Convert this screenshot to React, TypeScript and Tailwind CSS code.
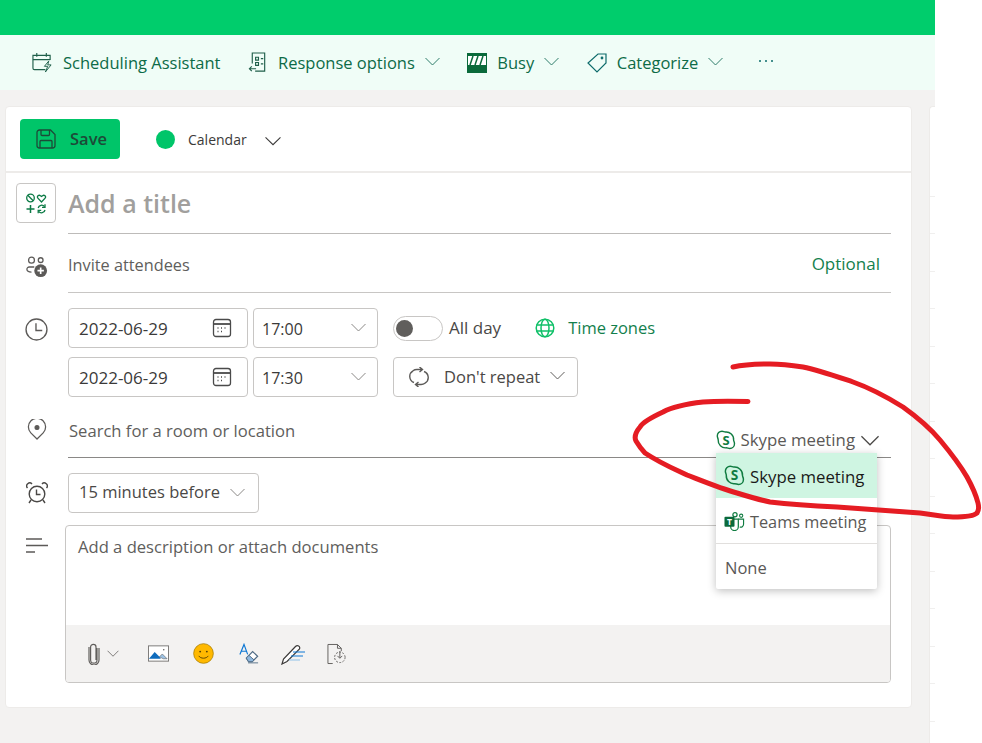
import type { ReactNode } from 'react';

const Chevron = ({ className = 'w-[15px] h-[9px] text-[#605e5c]' }: { className?: string }) => (
  <svg viewBox="0 0 15 9" className={className} fill="none" stroke="currentColor" strokeWidth="1">
    <path d="M0.5 1 L7.5 8 L14.5 1" />
  </svg>
);

const SkypeIcon = ({ className = '' }: { className?: string }) => (
  <svg viewBox="0 0 20 20" className={className} fill="none">
    <path
      d="M6 1.200c1.300 0 2.100.7 3.400.8 4.300-.5 8.700 3.400 8.200 8 .1 1.300.9 2.100.9 3.700 0 2.700-2.100 4.800-4.700 4.800-1.400 0-2.200-.7-3.600-.7C5.800 18.300 1.800 14.500 2.200 10c.1-1.400-.9-2.300-.9-4C1.300 3.300 3.300 1.200 6 1.200z"
      stroke="#107c41"
      strokeWidth="1.400"
    />
    <text x="10" y="14.500" textAnchor="middle" fontSize="13" fontWeight="700" fill="#107c41" fontFamily="Open Sans, sans-serif">
      S
    </text>
  </svg>
);

const TeamsIcon = ({ className = '' }: { className?: string }) => (
  <svg viewBox="0 0 22 20" className={className} fill="none">
    <circle cx="11.500" cy="3.500" r="2.200" stroke="#107c41" strokeWidth="1.300" />
    <circle cx="18" cy="4.500" r="1.700" stroke="#107c41" strokeWidth="1.100" />
    <path d="M15 8h5.500v5.500a3 3 0 0 1-4 2.800" stroke="#107c41" strokeWidth="1.200" />
    <path d="M7 8h8v8a4 4 0 0 1-8 0z" stroke="#107c41" strokeWidth="1.300" />
    <rect x="0.500" y="5.500" width="10.500" height="10.500" rx="1" fill="#0b6a3b" />
    <text x="5.700" y="14" textAnchor="middle" fontSize="9" fontWeight="700" fill="#fff" fontFamily="Open Sans, sans-serif">
      T
    </text>
  </svg>
);

const CalendarIcon = () => (
  <svg viewBox="0 0 20 20" className="w-[20px] h-[20px] text-[#4a4a4a]" fill="none" stroke="currentColor" strokeWidth="1.300">
    <rect x="1.500" y="1.500" width="17" height="17" rx="2.500" />
    <path d="M1.500 6h17" strokeWidth="1.800" />
    <path d="M5.500 10h1M9 10h1M12.500 10h1M5.500 13.500h1M9 13.500h1" strokeWidth="1.400" />
  </svg>
);

const ToolbarItem = ({ icon, label, chevron }: { icon: ReactNode; label: string; chevron?: boolean }) => (
  <div className="flex items-center gap-[10px]">
    {icon}
    <span className="pt-[2px] text-[16.500px] text-[#0d6b47]">{label}</span>
    {chevron && <Chevron className="w-[15px] h-[9px] -mt-[3px] text-[#2e7d6a]" />}
  </div>
);

const DateField = ({ value }: { value: string }) => (
  <div className="w-[180px] h-[40px] flex items-center justify-between pl-[10px] pr-[15px] border border-[#c8c6c4] rounded-[4px] text-[17px] text-[#3b3a39]">
    <span className="pt-[1px]">{value}</span>
    <CalendarIcon />
  </div>
);

const TimeField = ({ value }: { value: string }) => (
  <div className="w-[125px] h-[40px] flex items-center justify-between pl-[8px] pr-[11px] border border-[#c8c6c4] rounded-[4px] text-[16px] text-[#3b3a39]">
    <span className="pt-[1px]">{value}</span>
    <Chevron className="w-[15px] h-[9px] -mt-[2px] text-[#8a8886]" />
  </div>
);

export default function App() {
  return (
    <div className="relative w-[982px] h-[743px] overflow-hidden bg-white font-['Open_Sans',sans-serif]">
      <div className="w-[935px] h-full flex flex-col bg-[#f3f2f1]">
        <div className="h-[35px] bg-[#00cd6c]" />
        <div className="h-[55px] flex items-center pl-[32px] bg-[#f0fdf7]">
          <div className="flex items-center gap-[27.500px]">
            <ToolbarItem
              label="Scheduling Assistant"
              icon={
                <svg viewBox="0 0 22 22" className="w-[21px] h-[21px]" fill="none" stroke="#1f5f4a" strokeWidth="1.200">
                  <path d="M14 18.500H2.500a1.500 1.500 0 0 1-1.500-1.500V3.500h18v5" stroke="#1f5f4a" />
                  <path d="M1 8h18M5 1v4M15 1v4" />
                  <path d="M17.500 9.500L13 15h3.500L14 21l6-7.500h-3.500z" strokeWidth="1" />
                </svg>
              }
            />
            <ToolbarItem
              label="Response options"
              chevron
              icon={
                <svg viewBox="0 0 20 22" className="w-[20px] h-[21px]" fill="none" stroke="#1f5f4a" strokeWidth="1.200">
                  <path d="M4 12V1h13v19H7" />
                  <path d="M7.500 5.500h3v3h-3zM7.500 11h3v3h-3zM13 7h2.500M13 12.500h2.500" />
                  <path d="M8 17.500H1M3.500 15l-2.500 2.500L3.500 20" />
                </svg>
              }
            />
            <ToolbarItem
              label="Busy"
              chevron
              icon={
                <svg viewBox="0 0 20 20" className="w-[20px] h-[20px]">
                  <rect x="0.500" y="0.500" width="19" height="19" fill="#fff" stroke="#0b6a3b" />
                  <rect x="0" y="12" width="20" height="8" fill="#0b6a3b" />
                  <rect x="0" y="0" width="20" height="3" fill="#0b6a3b" />
                  <path d="M3 12l3-9M8 12l3-9M13 12l3-9" stroke="#0b6a3b" strokeWidth="1.500" />
                </svg>
              }
            />
            <ToolbarItem
              label="Categorize"
              chevron
              icon={
                <svg viewBox="0 0 20 20" className="w-[20px] h-[20px]" fill="none" stroke="#0d6b6b" strokeWidth="1.200">
                  <path d="M11 1h8v9l-9 9-9-9z" />
                  <circle cx="15" cy="5" r="0.800" fill="#0d6b6b" />
                </svg>
              }
            />
            <span className="flex gap-[4px] ml-[8px] -mt-[3px]">
              <span className="w-[2px] h-[2px] rounded-full bg-[#0d6b6b]" />
              <span className="w-[2px] h-[2px] rounded-full bg-[#0d6b6b]" />
              <span className="w-[2px] h-[2px] rounded-full bg-[#0d6b6b]" />
            </span>
          </div>
        </div>

        <div className="flex-1 flex gap-[17px] pt-[16px] pl-[5px]">
          <div className="w-[907px] h-[602px] rounded-[4px] bg-white border border-[#edebe9]">
            {/* header */}
            <div className="h-[66px] flex items-center pl-[14px] border-b-2 border-[#edebe9]">
              <div className="w-[100px] h-[40px] flex items-center pl-[16px] gap-[14px] rounded-[4px] bg-[#00c569] text-[16.500px] font-semibold text-[#1d4a38]">
                <svg viewBox="0 0 20 20" className="w-[20px] h-[20px]" fill="none" stroke="#1d4a38" strokeWidth="1.300">
                  <path d="M1 3.500A2.500 2.500 0 0 1 3.500 1h11L19 5.500v11a2.500 2.500 0 0 1-2.500 2.500h-13A2.500 2.500 0 0 1 1 16.500z" />
                  <path d="M5 1v4.500a1 1 0 0 0 1 1h6.500a1 1 0 0 0 1-1V1M4 19v-6.500a1 1 0 0 1 1-1h10a1 1 0 0 1 1 1V19" />
                </svg>
                <span className="pt-[1px]">Save</span>
              </div>
              <span className="ml-[36px] w-[19px] h-[19px] rounded-full bg-[#00c569]" />
              <span className="ml-[13px] text-[14px] text-[#3b3a39]">Calendar</span>
              <Chevron className="w-[16px] h-[10px] ml-[18px] mt-[3px] text-[#3b3a39]" />
            </div>

            <div className="pl-[10px] pr-[20px]">
              {/* title */}
              <div className="flex h-[61px]">
                <div className="w-[40px] h-[40px] mt-[10px] flex items-center justify-center border border-[#c8c6c4] rounded-[4px]">
                  <svg viewBox="0 0 22 21" className="w-[22px] h-[21px]" fill="none" stroke="#0b7a45" strokeWidth="1.300">
                    <circle cx="5.500" cy="5" r="3.800" />
                    <path d="M2.800 2.300l5.400 5.400" />
                    <path d="M16.500 9l-3.600-3.800c-1.400-1.800.9-3.700 2.500-2.500l1.100.8 1.100-.8c1.600-1.200 3.900.7 2.500 2.500z" />
                    <path d="M1.500 16h8M5.500 12v8" strokeWidth="1.500" />
                    <path d="M13.200 15a3.500 3.500 0 0 1 6.300-1.300M20 17a3.500 3.500 0 0 1-6.300 1.300" />
                    <path d="M20 11.300v3h-3M13.200 20.300v-3h3" />
                  </svg>
                </div>
                <div className="flex-1 ml-[12px] flex items-center pt-[2px] border-b border-[#bdbbb9] text-[25px] font-semibold text-[#a19f9d]">
                  Add a title
                </div>
              </div>

              {/* attendees */}
              <div className="flex h-[59px]">
                <div className="w-[52px] flex items-center pl-[10px] pt-[6px]">
                  <svg viewBox="0 0 24 24" className="w-[22px] h-[22px]" fill="none" stroke="#5c5a58" strokeWidth="1.400">
                    <circle cx="6" cy="4.500" r="3.200" />
                    <circle cx="16" cy="4.500" r="2.600" />
                    <path d="M9 12H3.500A2.500 2.500 0 0 0 1 14.500c0 1.800 2 3 5 3" />
                    <circle cx="16" cy="16" r="7" fill="#5c5a58" stroke="none" />
                    <path d="M16 12.500v7M12.500 16h7" stroke="#fff" strokeWidth="1.800" />
                  </svg>
                </div>
                <div className="flex-1 flex items-center justify-between border-b border-[#c8c6c4] pt-[4px] pr-[11px]">
                  <span className="text-[16.300px] text-[#605e5c]">Invite attendees</span>
                  <span className="text-[17px] text-[#13804d] -mt-[2px]">Optional</span>
                </div>
              </div>

              {/* dates */}
              <div className="flex mt-[15px]">
                <div className="w-[52px] pl-[9px] pt-[10px]">
                  <svg viewBox="0 0 22 22" className="w-[23px] h-[23px]" fill="none" stroke="#5c5a58" strokeWidth="1.300">
                    <circle cx="11" cy="11" r="10" />
                    <path d="M10.500 5v7h6" />
                  </svg>
                </div>
                <div className="flex flex-col gap-[9px]">
                  <div className="flex items-center gap-[5px]">
                    <DateField value="2022-06-29" />
                    <TimeField value="17:00" />
                    <div className="relative ml-[10px] w-[50px] h-[25px] rounded-full border border-[#c8c6c4]">
                      <span className="absolute left-[2px] top-[3px] w-[17px] h-[17px] rounded-full bg-[#605e5c]" />
                    </div>
                    <span className="ml-[1px] text-[17px] text-[#4a4846]">All day</span>
                    <svg viewBox="0 0 20 20" className="ml-[29px] w-[20px] h-[20px]" fill="none" stroke="#0fc068" strokeWidth="1.500">
                      <circle cx="10" cy="10" r="8.800" />
                      <ellipse cx="10" cy="10" rx="4" ry="8.800" />
                      <path d="M1.500 7h17M1.500 13h17" />
                    </svg>
                    <span className="ml-[8px] pt-[1px] text-[16.500px] text-[#13804d]">Time zones</span>
                  </div>
                  <div className="flex items-center gap-[5px]">
                    <DateField value="2022-06-29" />
                    <TimeField value="17:30" />
                    <div className="ml-[10px] w-[185px] h-[40px] flex items-center pl-[15px] border border-[#c8c6c4] rounded-[4px] text-[16.500px] text-[#4a4846]">
                      <svg viewBox="0 0 20 20" className="w-[20px] h-[20px]" fill="none" stroke="#5c5a58" strokeWidth="1.400">
                        <path d="M5 15.500A6.500 6.500 0 0 1 4 3.800a6.500 6.500 0 0 1 4-1.300h5M10.500 0L13.500 2.500 10.500 5" />
                        <path d="M15 4.500a6.500 6.500 0 0 1 1 11.700 6.500 6.500 0 0 1-4 1.300H7M9.500 20L6.500 17.500 9.500 15" />
                      </svg>
                      <span className="ml-[15px] pt-[1px]">Don't repeat</span>
                      <Chevron className="w-[15px] h-[9px] ml-[10px] -mt-[4px] text-[#605e5c]" />
                    </div>
                  </div>
                </div>
              </div>

              {/* location */}
              <div className="flex h-[48px] mt-[13px]">
                <div className="w-[52px] pl-[11px] pt-[9px]">
                  <svg viewBox="0 0 20 22" className="w-[20px] h-[21px]" fill="none" stroke="#5c5a58" strokeWidth="1.300">
                    <path d="M10 21L3.500 14.500a9 9 0 1 1 13 0z" />
                    <circle cx="10" cy="9" r="2" fill="#5c5a58" />
                  </svg>
                </div>
                <div className="flex-1 flex justify-between border-b border-[#8a8886] pl-[1px] pr-[11px]">
                  <span className="text-[16.600px] leading-[22px] mt-[10px] text-[#605e5c]">Search for a room or location</span>
                  <div className="flex items-center gap-[5px] mt-[17px] h-[26px] text-[16.800px] text-[#5a5856]">
                    <SkypeIcon className="w-[20px] h-[20px]" />
                    Skype meeting
                    <Chevron className="w-[20px] h-[11px] text-[#4a4846]" />
                  </div>
                </div>
              </div>

              {/* reminder */}
              <div className="flex mt-[15px]">
                <div className="w-[52px] pl-[10px] pt-[9px]">
                  <svg viewBox="0 0 22 22" className="w-[22px] h-[22px]" fill="none" stroke="#4a4846" strokeWidth="1.400">
                    <circle cx="11" cy="12" r="7.800" />
                    <path d="M10.500 7.500v5h4" />
                    <path d="M1.500 6a3 3 0 0 1 4.500-4M20.500 6a3 3 0 0 0-4.500-4M5 18l-2 3M17 18l2 3" />
                  </svg>
                </div>
                <div className="w-[191px] h-[40px] flex items-center pl-[10px] pb-[1px] border border-[#c8c6c4] rounded-[4px] text-[16.500px] text-[#4a4846]">
                  15 minutes before
                  <Chevron className="w-[15px] h-[9px] ml-[10px] text-[#8a8886]" />
                </div>
              </div>

              {/* description */}
              <div className="flex mt-[12px]">
                <div className="w-[49px] pl-[10px] pt-[13px]">
                  <svg viewBox="0 0 22 15" className="w-[22px] h-[15px]" fill="none" stroke="#5c5a58" strokeWidth="1.500">
                    <path d="M0 1h16M0 7.500h22M0 14h9" />
                  </svg>
                </div>
                <div className="flex-1 h-[158px] flex flex-col rounded-[4px] border border-[#c8c6c4] overflow-hidden">
                  <div className="h-[99px] pl-[12px] pt-[9px] text-[16.600px] text-[#605e5c]">Add a description or attach documents</div>
                  <div className="flex-1 flex items-center pl-[22px] bg-[#f3f2f1]">
                    <svg viewBox="0 0 12 22" className="w-[12px] h-[22px]" fill="none" stroke="#605e5c" strokeWidth="1.200">
                      <path d="M9 5v12a3.200 3.200 0 0 1-6.400 0V4a2.700 2.700 0 0 1 5.400 0v13" />
                      <path d="M11 5v12a5 5 0 0 1-10 0V4" />
                    </svg>
                    <Chevron className="w-[12px] h-[7px] ml-[7px] text-[#605e5c]" />
                    <svg viewBox="0 0 22 17" className="ml-[29px] w-[21px] h-[17px]" fill="none">
                      <rect x="0.500" y="0.500" width="21" height="16" fill="#fff" stroke="#7a7876" />
                      <path d="M1 14l6-7 5 5 1.500 2H1z" fill="#0f6cbd" />
                      <path d="M12 12l3-3 5 5h-4z" fill="#9dc3e6" stroke="#5c5a58" strokeWidth="0.600" />
                      <circle cx="16.500" cy="4.500" r="0.800" fill="#5c5a58" />
                    </svg>
                    <svg viewBox="0 0 22 22" className="ml-[24px] w-[21px] h-[21px]" fill="none">
                      <circle cx="11" cy="11" r="10.300" fill="#ffb900" stroke="#a67c00" strokeWidth="0.800" />
                      <circle cx="7.500" cy="9" r="1" fill="#5c4400" />
                      <circle cx="14.500" cy="9" r="1" fill="#5c4400" />
                      <path d="M6 13.500c2 3.200 8 3.200 10 0" stroke="#5c4400" strokeWidth="1" />
                    </svg>
                    <svg viewBox="0 0 22 22" className="ml-[25px] w-[20px] h-[21px]" fill="none">
                      <path d="M1 12L5.500 1 9.500 12M2.500 8.500h5.500" stroke="#0f78d4" strokeWidth="1.300" />
                      <path d="M8 16l7-7 5.500 5-6 6h-4z" fill="#fff" stroke="#4f6b85" strokeWidth="1.300" />
                      <path d="M8 16l3-3 5.500 5-2 2h-4z" fill="#8fb8de" stroke="#4f6b85" strokeWidth="1" />
                      <path d="M10 21.300h11" stroke="#4f6b85" strokeWidth="1" />
                    </svg>
                    <svg viewBox="0 0 24 22" className="ml-[22px] w-[24px] h-[22px]" fill="none">
                      <path d="M1 21l1.500-5L14.500 3.500c2-2 5-.2 4 2.500L6 18.500z" fill="#fff" stroke="#3b3a39" strokeWidth="1.200" />
                      <path d="M12 9h12" stroke="#0f78d4" strokeWidth="1" />
                      <path d="M10 13h12" stroke="#0f78d4" strokeWidth="1" />
                      <path d="M8 17h11" stroke="#8fc1ea" strokeWidth="1.200" />
                    </svg>
                    <svg viewBox="0 0 21 22" className="ml-[22px] w-[20px] h-[22px]" fill="none" stroke="#605e5c" strokeWidth="1">
                      <path d="M6 21H1V1h10l4 4v3M11 1v4h4" />
                      <circle cx="13.500" cy="14.500" r="5.500" strokeDasharray="2 1.500" />
                      <path d="M13.500 8v7M11 13l2.500 2.500L16 13" />
                    </svg>
                  </div>
                </div>
              </div>
            </div>
          </div>

          {/* next card, cut off at the window edge */}
          <div className="flex-1 rounded-tl-[4px] border-l border-t border-[#edebe9] bg-white pt-[52px]">
            {Array.from({ length: 15 }, (_, i) => (
              <div key={i} className="h-[37.500px] border-b border-[#f0efee]" />
            ))}
          </div>
        </div>
      </div>

      {/* dropdown */}
      <div className="absolute left-[716px] top-[453px] w-[161px] h-[136px] flex flex-col bg-white rounded-b-[2px] shadow-[0_2px_8px_rgba(0,0,0,0.25)]">
        <div className="h-[45px] flex items-center gap-[5px] pl-[8px] pt-[3px] bg-[#cff5e2] text-[16.800px] text-[#1b1a19]">
          <SkypeIcon className="w-[21px] h-[21px] -mt-[3px]" />
          Skype meeting
        </div>
        <div className="h-[46px] flex items-center gap-[5px] pl-[8px] pt-[3px] border-b border-[#e1dfdd] text-[16.300px] text-[#5a5856]">
          <TeamsIcon className="w-[21px] h-[20px] -mt-[3px]" />
          Teams meeting
        </div>
        <div className="flex-1 flex items-center pl-[9px] pt-[3px] text-[16.500px] text-[#5a5856]">None</div>
      </div>

      {/* red marker scribble */}
      <svg viewBox="0 0 982 743" className="absolute inset-0 w-[982px] h-[743px] pointer-events-none" fill="none">
        <path
          d="M748 401.500C730 401 715 401 703 402C685 404 672 407 663 412C650 418 643 422 640 427C635 433 634 437 636 441C639 446 642 450 645 453C660 463 672 468 687 475C705 482 722 489 737 493C750 497 760 500 770 502C795 505 815 506 837 507C865 509 895 511 920 513C935 515 945 517 953 517C965 517 974 516 977 513C979 510 979 507 978 503C976 495 972 486 967 477C960 465 950 452 940 440C930 428 917 417 903 407C887 397 870 388 853 382C835 376 818 370 803 367C790 365 780 364 770 364C755 364 742 365 733 367"
          stroke="#e51c23"
          strokeWidth="5"
          strokeLinecap="round"
          strokeLinejoin="round"
        />
      </svg>
    </div>
  );
}
